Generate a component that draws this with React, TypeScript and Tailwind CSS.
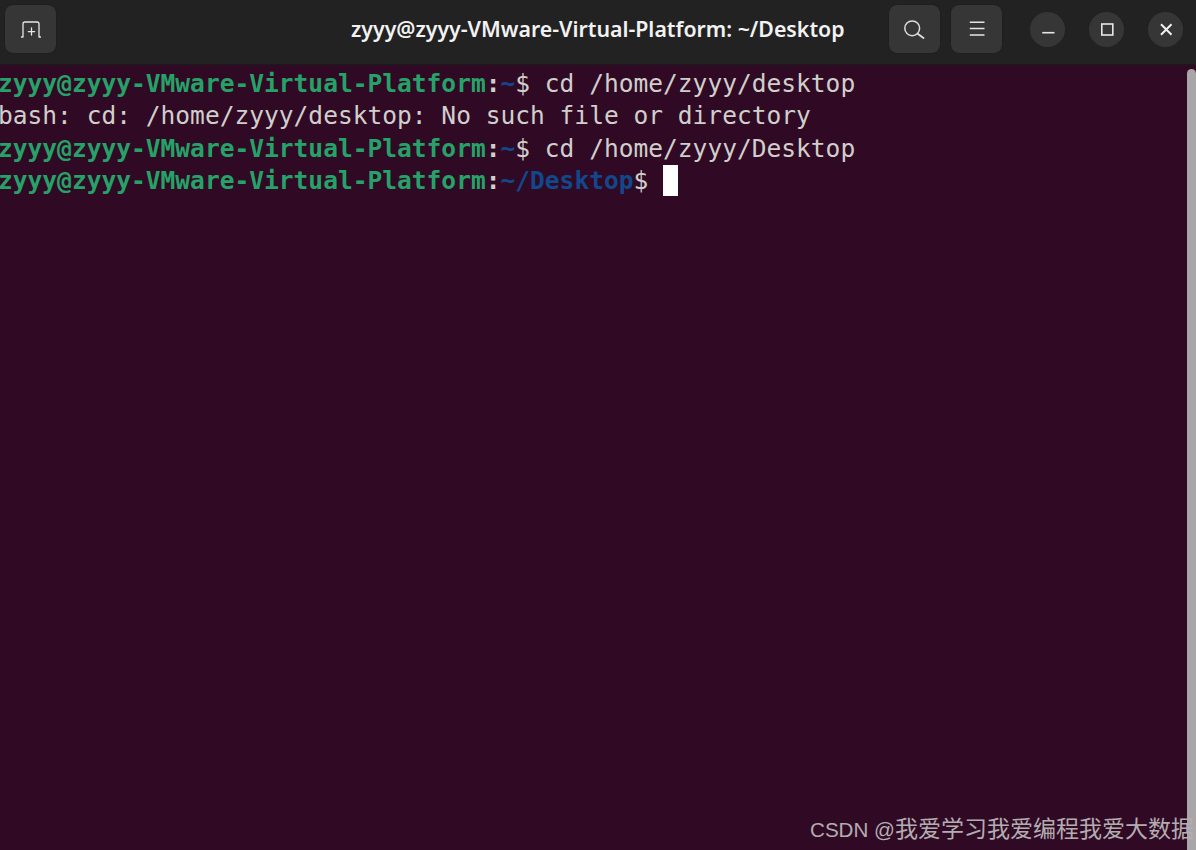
import { useEffect } from 'react';

const mono = "font-['DejaVu_Sans_Mono',monospace]";

function Prompt({ path = '~' }: { path?: string }) {
  return (
    <>
      <span className="font-bold text-[#26a269]">zyyy@zyyy-VMware-Virtual-Platform</span>
      <span className="font-bold text-[#d0cfcc]">:</span>
      <span className="font-bold text-[#12488b]">{path}</span>
      <span className="text-[#d0cfcc]">$ </span>
    </>
  );
}

function HeaderButton({ children }: { children: React.ReactNode }) {
  return (
    <div className="flex h-[48px] w-[51px] items-center justify-center rounded-[8px] bg-[#363636] shadow-[0_0_1px_#111]">
      {children}
    </div>
  );
}

function WindowButton({ children }: { children: React.ReactNode }) {
  return (
    <div className="flex h-[35px] w-[35px] items-center justify-center rounded-full bg-[#363636]">
      {children}
    </div>
  );
}

export default function App() {
  useEffect(() => {
    document.body.style.background = '#300a24';
  }, []);

  return (
    <div className="relative flex h-[850px] w-[1196px] flex-col overflow-hidden bg-[#300a24]">
      {/* Title bar */}
      <header className="flex h-[65px] shrink-0 items-center justify-between border-b border-[#1a1a1a] bg-[#222222] pb-[11px] pl-[5px] pr-[13px] pt-[5px]">
        <HeaderButton>
          <svg width="24" height="24" viewBox="0 0 24 24" fill="none" stroke="#e6e6e6" strokeWidth="1.3" strokeLinecap="round" strokeLinejoin="round">
            <path d="M2.5 20H4V7a2 2 0 0 1 2-2h12a2 2 0 0 1 2 2v13h1.5" />
            <path d="M12.5 11v7M9.3 14.6h6.4" />
          </svg>
        </HeaderButton>
        <div className="ml-[295px] w-[493px] whitespace-nowrap text-center font-['Noto_Sans',sans-serif] text-[21.3px] font-semibold leading-[30px] text-[#f2f2f2]">
          zyyy@zyyy-VMware-Virtual-Platform: ~/Desktop
        </div>
        <div className="ml-auto flex items-center">
          <div className="flex gap-[11px]">
            <HeaderButton>
              <svg width="24" height="24" viewBox="0 0 24 24" fill="none" stroke="#dcdcdc" strokeLinecap="round">
                <circle cx="9.2" cy="11.3" r="7.4" strokeWidth="1.5" />
                <path d="M15 17l5.5 4" strokeWidth="2" />
              </svg>
            </HeaderButton>
            <HeaderButton>
              <svg width="20" height="20" viewBox="0 0 20 20" fill="none" stroke="#e6e6e6" strokeWidth="1.5">
                <path d="M2.8 3.3h14.7M2.8 9.5h14.7M2.8 16h14.7" />
              </svg>
            </HeaderButton>
          </div>
          <div className="ml-[28px] flex gap-[24px]">
            <WindowButton>
              <svg width="14" height="14" viewBox="0 0 14 14" fill="none" stroke="#e6e6e6" strokeWidth="1.6">
                <path d="M1.2 10.7h12.3" />
              </svg>
            </WindowButton>
            <WindowButton>
              <svg width="14" height="14" viewBox="0 0 14 14" fill="none" stroke="#e6e6e6" strokeWidth="1.6">
                <rect x="1.8" y="2" width="11" height="11" />
              </svg>
            </WindowButton>
            <WindowButton>
              <svg width="14" height="14" viewBox="0 0 14 14" fill="none" stroke="#f2f2f2" strokeWidth="2">
                <path d="M2 2.2l10.5 10.5M12.5 2.2L2 12.7" />
              </svg>
            </WindowButton>
          </div>
        </div>
      </header>

      {/* Terminal output */}
      <main className={`-ml-[2px] flex-1 pt-[2.5px] ${mono} text-[24.56px] leading-[32.6px] text-[#d0cfcc]`}>
        <div className="whitespace-pre">
          <Prompt />cd /home/zyyy/desktop
        </div>
        <div className="whitespace-pre">bash: cd: /home/zyyy/desktop: No such file or directory</div>
        <div className="whitespace-pre">
          <Prompt />cd /home/zyyy/Desktop
        </div>
        <div className="flex whitespace-pre">
          <span>
            <Prompt path="~/Desktop" />
          </span>
          <span className="h-[31px] w-[14.5px] bg-white" />
        </div>
      </main>

      {/* Scrollbar thumb */}
      <div className="absolute bottom-0 right-0 top-[69px] w-[9px] rounded-t-[5px] bg-[#a9a6a8]" />

      {/* Watermark */}
      <div className="absolute bottom-[5px] right-[2px] whitespace-nowrap font-['Liberation_Sans','Noto_Sans_CJK_SC',sans-serif] text-[23px] leading-[30px] text-[#b3adb1]">
        <span className="text-[20.6px]">CSDN @</span>我爱学习我爱编程我爱大数据
      </div>
    </div>
  );
}
